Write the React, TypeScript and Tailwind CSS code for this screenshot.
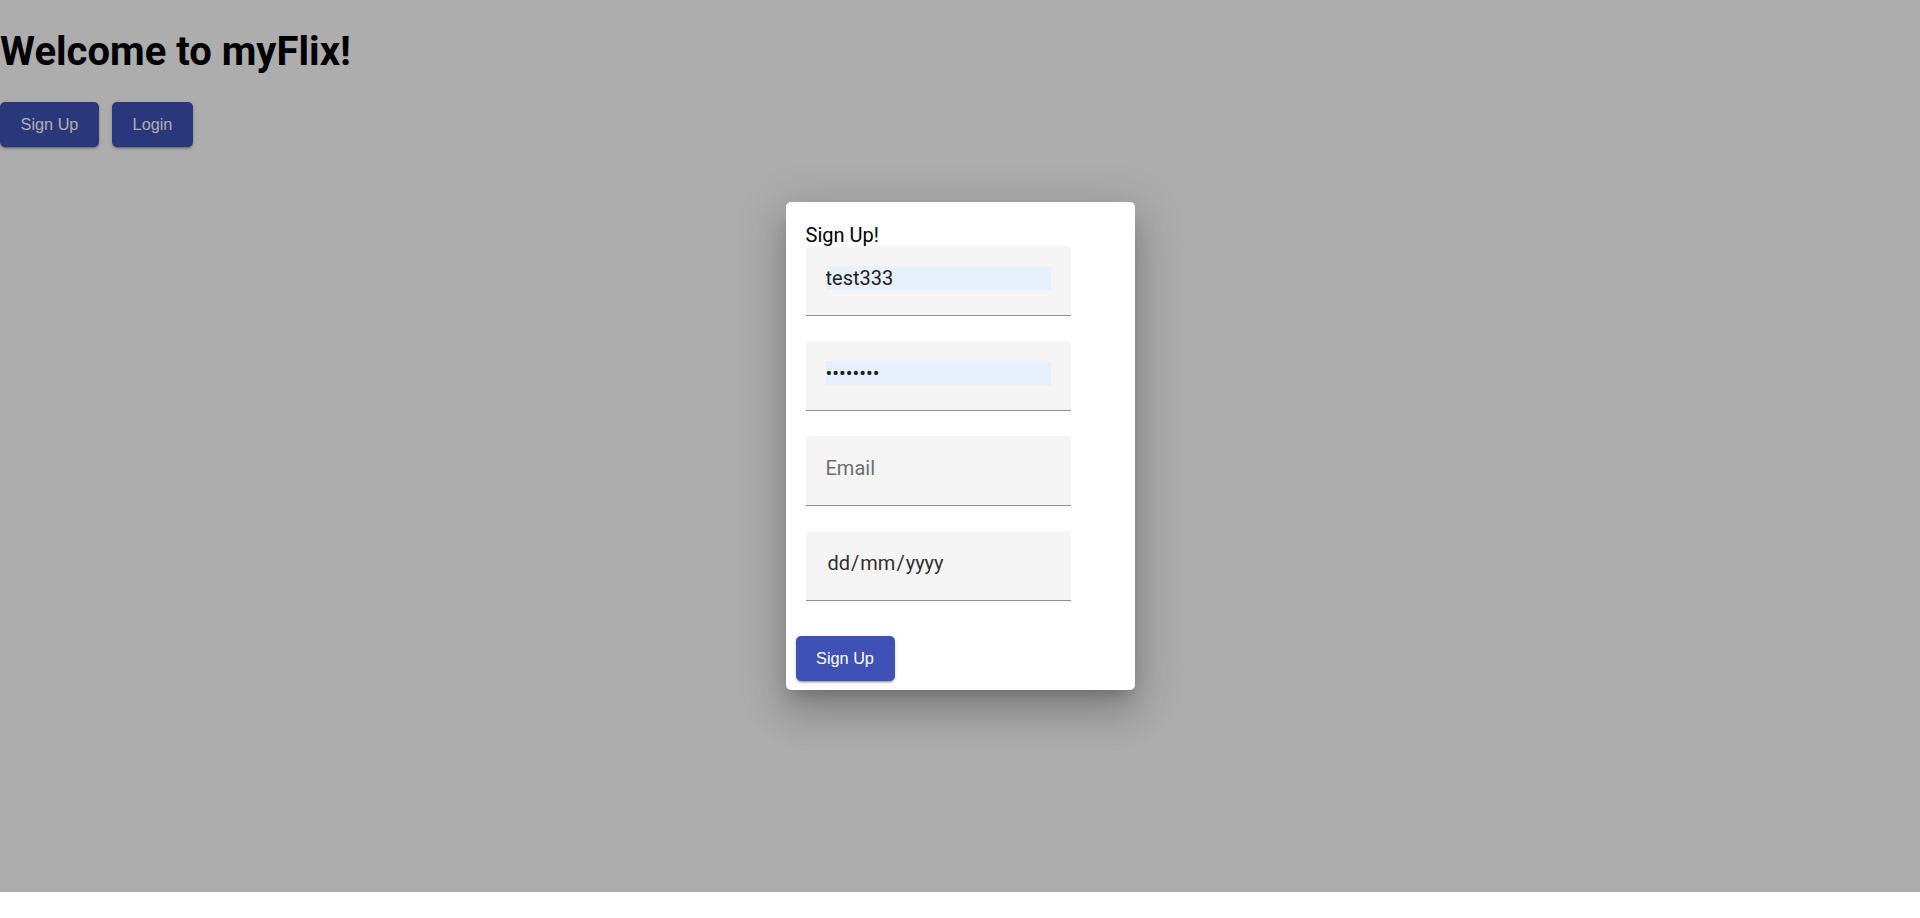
import React from "react";

function Field({
  value,
  placeholder,
  type = "text",
  filled = false,
  date = false,
}: {
  value?: string;
  placeholder?: string;
  type?: string;
  filled?: boolean;
  date?: boolean;
}) {
  return (
    <div className="pb-[25px]">
      <div className="w-[265px] bg-[#f5f5f5] rounded-t-[5px] border-b border-[#8f8f8f] px-[20px] pt-[20px] pb-[25px]">
        {date ? (
          <div className="h-[24px] leading-[24px] text-[20px] text-[#303030] pl-[2px]">
            dd<span className="mx-[1px]">/</span>mm<span className="mx-[1px]">/</span>yyyy
          </div>
        ) : (
          <input
            readOnly
            type={type}
            value={value}
            placeholder={placeholder}
            className={`block w-[225px] h-[24px] leading-[24px] text-[20px] text-[#212121] placeholder:text-[#6e6e6e] outline-none ${
              filled ? "bg-[#e8f0fe]" : "bg-transparent"
            }`}
            style={{ fontFamily: "Roboto, sans-serif" }}
          />
        )}
      </div>
    </div>
  );
}

const btnShadow =
  "shadow-[0_3px_1px_-2px_rgba(0,0,0,0.2),0_2px_2px_0_rgba(0,0,0,0.14),0_1px_5px_0_rgba(0,0,0,0.12)]";

export default function App() {
  return (
    <div
      className="min-h-[918px] bg-white relative"
      style={{ fontFamily: "Roboto, 'Noto Sans', sans-serif" }}
    >
      <h1 className="m-0 pt-[28px] text-[40px] leading-[47px] font-bold text-black">
        Welcome to myFlix!
      </h1>
      <div className="mt-[27px] flex gap-[13px]">
        <button
          className={`h-[45px] w-[99px] rounded-[5px] bg-[#3f51b5] text-white text-[16.25px] ${btnShadow}`}
          style={{ fontFamily: "'Liberation Sans', Arial, sans-serif" }}
        >
          Sign Up
        </button>
        <button
          className={`h-[45px] w-[81px] rounded-[5px] bg-[#3f51b5] text-white text-[16.25px] ${btnShadow}`}
          style={{ fontFamily: "'Liberation Sans', Arial, sans-serif" }}
        >
          Login
        </button>
      </div>

      {/* backdrop */}
      <div className="absolute top-0 left-0 right-0 h-[892px] bg-[rgba(0,0,0,0.32)]" />

      {/* dialog */}
      <div className="absolute top-0 left-0 right-0 h-[892px] flex justify-center items-center">
        <div className="w-[349px] h-[488px] bg-white rounded-[5px] shadow-[0_11px_15px_-7px_rgba(0,0,0,0.2),0_24px_38px_3px_rgba(0,0,0,0.14),0_9px_46px_8px_rgba(0,0,0,0.12)] pt-[20px] px-[20px]">
          <div className="text-[20px] leading-[24px] text-black pt-[1px] h-[24px]">
            Sign Up!
          </div>
          <Field value="test333" filled />
          <Field value="12345678" type="password" filled />
          <Field placeholder="Email" />
          <Field date />
          <div className="-ml-[10px] pt-[10px]">
            <button
              className={`h-[45px] w-[99px] rounded-[5px] bg-[#3f51b5] text-white text-[16.25px] ${btnShadow}`}
              style={{ fontFamily: "'Liberation Sans', Arial, sans-serif" }}
            >
              Sign Up
            </button>
          </div>
        </div>
      </div>
    </div>
  );
}
